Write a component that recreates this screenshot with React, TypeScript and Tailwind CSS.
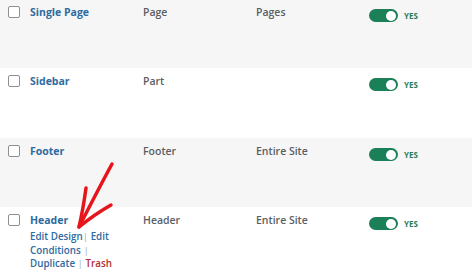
import React from 'react';

type Row = {
  title: string;
  type: string;
  location: string;
  gray: boolean;
  h: string;
  actions?: boolean;
};

const rows: Row[] = [
  { title: 'Single Page', type: 'Page', location: 'Pages', gray: true, h: 'h-[68px]' },
  { title: 'Sidebar', type: 'Part', location: '', gray: false, h: 'h-[70px]' },
  { title: 'Footer', type: 'Footer', location: 'Entire Site', gray: true, h: 'h-[69px]' },
  { title: 'Header', type: 'Header', location: 'Entire Site', gray: false, h: 'h-[70px]', actions: true },
];

const Toggle = () => (
  <div className="flex items-center gap-[6px] pt-[4px]">
    <div className="w-[29px] h-[13px] rounded-full bg-[#1b7f57] flex items-center justify-end pr-[2px]">
      <div className="w-[10px] h-[10px] rounded-full bg-white" />
    </div>
    <span className="text-[8px] font-bold text-[#2a7d59] leading-none">YES</span>
  </div>
);

export default function App() {
  return (
    <div className="relative w-[474px] h-[277px] bg-white overflow-hidden font-['Open_Sans',sans-serif]">
      <div className="w-[472px] flex flex-col">
        {rows.map((r, i) => (
          <div
            key={r.title}
            className={`flex items-start ${i === 0 ? 'pt-[5px]' : 'pt-[6px]'} ${r.h} ${r.gray ? 'bg-[#f6f6f6]' : 'bg-white'}`}
          >
            <div className="w-[30px] pl-[8px] pt-[1px] shrink-0">
              <div className="w-[12px] h-[12px] rounded-[2px] border border-[#8c8f94] bg-white" />
            </div>
            <div className="w-[113px] shrink-0">
              <div className="text-[10.5px] font-bold text-[#2f6aa0] leading-[14px]">{r.title}</div>
              {r.actions && (
                <div className="mt-[3px] w-[100px] text-[9.8px] font-semibold leading-[13.5px] text-[#2f6aa0]">
                  Edit Design<span className="text-[#a7aaad] font-normal">| </span>Edit Conditions{' '}
                  <span className="text-[#a7aaad] font-normal">|</span> Duplicate{' '}
                  <span className="text-[#a7aaad] font-normal">|</span>{' '}
                  <span className="text-[#b32d2e]">Trash</span>
                </div>
              )}
            </div>
            <div className="w-[113px] shrink-0 text-[10.5px] font-semibold text-[#5a5e63] leading-[14px]">{r.type}</div>
            <div className="w-[113px] shrink-0 text-[10.5px] font-semibold text-[#5a5e63] leading-[14px]">{r.location}</div>
            <Toggle />
          </div>
        ))}
      </div>
      <svg className="absolute left-0 top-0 pointer-events-none" width="474" height="277" viewBox="0 0 474 277">
        <g fill="none" stroke="#e8141c" strokeWidth="3.5" strokeLinecap="round" strokeLinejoin="round">
          <path d="M112 164 Q 100 186 79 227" />
          <path d="M86 188 Q 83 210 79 227 Q 95 214 111 205" />
        </g>
      </svg>
    </div>
  );
}
